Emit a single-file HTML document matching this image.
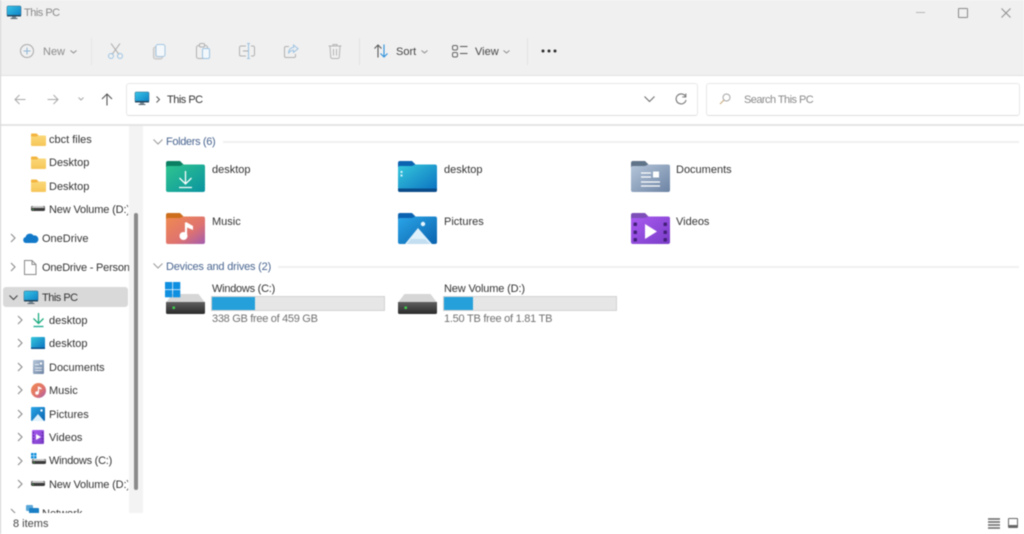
<!DOCTYPE html>
<html><head><meta charset="utf-8"><style>
html,body{margin:0;padding:0;width:1024px;height:534px;overflow:hidden;background:#fff}
body{position:relative;font-family:"Liberation Sans",sans-serif;font-size:11px;color:#333}
#w{position:absolute;left:0;top:0;width:1024px;height:534px;filter:blur(.4px)}
.t{position:absolute;white-space:nowrap;line-height:14px;height:14px;margin-top:1px}
.b{position:absolute}
svg.a{position:absolute;overflow:visible}
.g{color:#8a8a8a}
.h{color:#48648f}
.s{color:#707070}
.n{letter-spacing:-.5px}
</style></head><body><div id="w">
<svg width="0" height="0" style="position:absolute"><defs>
<linearGradient id="mon" x1="0" y1="0" x2="1" y2="1"><stop offset="0" stop-color="#38c6e8"/><stop offset="1" stop-color="#0d7fc4"/></linearGradient>
<linearGradient id="gGreen" x1="0" y1="0" x2="1" y2="1"><stop offset="0" stop-color="#2fc58f"/><stop offset="1" stop-color="#0a93a0"/></linearGradient>
<linearGradient id="gBlue" x1="0" y1="0" x2="1" y2="1"><stop offset="0" stop-color="#35c8dc"/><stop offset="1" stop-color="#0a6fc0"/></linearGradient>
<linearGradient id="gDoc" x1="0" y1="0" x2="1" y2="1"><stop offset="0" stop-color="#b5c6da"/><stop offset="1" stop-color="#6c83a3"/></linearGradient>
<linearGradient id="gMus" x1="0" y1="0" x2="1" y2="1"><stop offset="0" stop-color="#f08a50"/><stop offset=".6" stop-color="#de7270"/><stop offset="1" stop-color="#a35cb0"/></linearGradient>
<linearGradient id="gPic" x1="0" y1="0" x2="1" y2="1"><stop offset="0" stop-color="#2ba6e8"/><stop offset="1" stop-color="#0a62ae"/></linearGradient>
<linearGradient id="gVid" x1="0" y1="0" x2="1" y2="1"><stop offset="0" stop-color="#a95cf0"/><stop offset="1" stop-color="#7a3cc8"/></linearGradient>
<linearGradient id="gYel" x1="0" y1="0" x2="0" y2="1"><stop offset="0" stop-color="#fbdb7e"/><stop offset="1" stop-color="#f6c658"/></linearGradient>
<linearGradient id="gDr" x1="0" y1="0" x2="0" y2="1"><stop offset="0" stop-color="#5f5f5f"/><stop offset="1" stop-color="#2a2a2a"/></linearGradient>
<g id="pc"><rect x="0" y="0" width="14" height="10" rx="1" fill="url(#mon)" stroke="#255d80" stroke-width=".5"/><rect x="0" y="9" width="14" height="1.5" fill="#24465e"/><rect x="5" y="10.500" width="4" height="1.600" fill="#7b8b96"/><rect x="3.500" y="12" width="7" height="1" fill="#56646e"/></g>
<g id="yf"><path d="M0 1.500a1 1 0 0 1 1-1h4.500l2 2H14a1 1 0 0 1 1 1V12a1 1 0 0 1-1 1H1a1 1 0 0 1-1-1z" fill="url(#gYel)"/><path d="M0 1.500a1 1 0 0 1 1-1h4.500l2 2-2 1H0z" fill="#f3b53f"/></g>
<g id="dsm"><rect x="0" y="0" width="14" height="5" rx="1.500" fill="#3a3a3a"/><path d="M2 0h10l2 2H0z" fill="#c7c7c7"/><rect x="1.500" y="3" width="1" height="1" fill="#3fd04d"/></g>
<path id="chev" d="M0 0l4 4-4 4" fill="none" stroke="#8c8c8c" stroke-width="1.100"/>
<g id="bigdrive"><path d="M6.500 0h26l6.500 8.500H0z" fill="#d6d6d6"/><path d="M0 8h39v10.500a1.500 1.500 0 0 1-1.500 1.500h-36A1.500 1.500 0 0 1 0 18.500z" fill="url(#gDr)"/><rect x="6.500" y="12.500" width="2.500" height="2.500" fill="#3fd04d"/></g>
</defs></svg>

<!-- top chrome -->
<div class="b" style="left:0;top:0;width:1024px;height:75px;background:#f0f0f0"></div>
<div class="b" style="left:0;top:75px;width:1024px;height:1px;background:#e2e2e2"></div>
<svg class="a" style="left:7px;top:6px" width="14" height="13"><use href="#pc"/></svg>
<div class="t g n" style="left:24px;top:5px">This PC</div>
<div class="b" style="left:916px;top:12px;width:9px;height:1px;background:#b5b5b5"></div>
<div class="b" style="left:958px;top:8px;width:8px;height:8px;border:1px solid #8a8a8a;border-radius:1px"></div>
<svg class="a" style="left:1001px;top:8px" width="10" height="10"><path d="M.5.5l9 9M9.500.5l-9 9" stroke="#8f8f8f" fill="none"/></svg>

<!-- toolbar -->
<svg class="a" style="left:20px;top:44px" width="15" height="15"><circle cx="7" cy="7" r="6.500" fill="none" stroke="#a9a9a9"/><path d="M7 3.500v7M3.500 7h7" stroke="#8fb6d6"/></svg>
<div class="t g" style="left:43px;top:44px">New</div>
<svg class="a" style="left:70px;top:50px" width="7" height="4"><path d="M.5.5l3 2.500 3-2.500" stroke="#8c8c8c" fill="none"/></svg>
<div class="b" style="left:91px;top:38px;width:1px;height:27px;background:#e6e6e6"></div>
<svg class="a" style="left:108px;top:43px" width="15" height="17"><path d="M3 .5l8 11M12 .5l-8 11" stroke="#a9a9a9" fill="none"/><circle cx="3" cy="13" r="2.500" fill="none" stroke="#9cc3e2"/><circle cx="12" cy="13" r="2.500" fill="none" stroke="#9cc3e2"/></svg>
<svg class="a" style="left:153px;top:44px" width="13" height="16"><rect x=".5" y="3" width="9" height="12" rx="2" fill="#e0e0e0" stroke="#c4c4c4"/><rect x="3" y=".5" width="9" height="12" rx="2" fill="#f4f8fb" stroke="#a4c6e2"/></svg>
<svg class="a" style="left:196px;top:43px" width="15" height="17"><rect x=".5" y="2.500" width="11" height="13" rx="2" fill="none" stroke="#b0b0b0"/><rect x="3.500" y=".5" width="5" height="3.500" rx="1" fill="#f0f0f0" stroke="#b0b0b0"/><rect x="6.500" y="5.500" width="7" height="10" rx="1.500" fill="#f2f7fb" stroke="#9cc3e2"/></svg>
<svg class="a" style="left:239px;top:43px" width="16" height="17"><path d="M7 3H2a1.500 1.500 0 0 0-1.500 1.500v7A1.500 1.500 0 0 0 2 13h5M12 3h2a1.500 1.500 0 0 1 1.500 1.500v7A1.500 1.500 0 0 1 14 13h-2" fill="none" stroke="#b0b0b0"/><path d="M4 8h6" stroke="#a9a9a9"/><path d="M9.500.5v15M8 .5h3M8 15.500h3" stroke="#9cc3e2" fill="none"/></svg>
<svg class="a" style="left:284px;top:44px" width="15" height="15"><path d="M5 2.500H2A1.500 1.500 0 0 0 .5 4v8A1.500 1.500 0 0 0 2 13.500h8a1.500 1.500 0 0 0 1.500-1.500v-2" fill="none" stroke="#b0b0b0"/><path d="M9.500 1l4.500 3.700-4.500 3.700V6.200C7 6.200 5.500 7.500 4.500 9.500c0-3.500 2-6 5-6z" fill="none" stroke="#9cc3e2"/></svg>
<svg class="a" style="left:328px;top:43px" width="14" height="16"><path d="M.5 3h13M5 3V1.500h4V3M2 3l.7 11a1.500 1.500 0 0 0 1.500 1.500h5.600a1.500 1.500 0 0 0 1.500-1.500L12 3M5.500 6v6.500M8.500 6v6.500" fill="none" stroke="#b4b4b4"/></svg>
<div class="b" style="left:359px;top:38px;width:1px;height:27px;background:#e2e2e2"></div>
<svg class="a" style="left:373px;top:44px" width="16" height="14"><path d="M5 13.500V1M1.500 4.500L5 1l3.500 3.500" fill="none" stroke="#5a5a5a" stroke-width="1.100"/><path d="M11 .5V13M7.500 9.500L11 13l3.500-3.500" fill="none" stroke="#2a90dc" stroke-width="1.100"/></svg>
<div class="t" style="left:396px;top:44px;color:#444">Sort</div>
<svg class="a" style="left:421px;top:50px" width="7" height="4"><path d="M.5.5l3 2.500 3-2.500" stroke="#8c8c8c" fill="none"/></svg>
<svg class="a" style="left:452px;top:45px" width="16" height="13"><rect x=".5" y=".5" width="5" height="4.500" rx="1.500" fill="none" stroke="#666"/><rect x=".5" y="7.500" width="5" height="4.500" rx="1.500" fill="none" stroke="#666"/><path d="M8 1.500h7.500M8 8.500h7.500" stroke="#555"/></svg>
<div class="t" style="left:475px;top:44px;color:#444">View</div>
<svg class="a" style="left:503px;top:50px" width="7" height="4"><path d="M.5.5l3 2.500 3-2.500" stroke="#8c8c8c" fill="none"/></svg>
<div class="b" style="left:527px;top:38px;width:1px;height:27px;background:#e2e2e2"></div>
<svg class="a" style="left:541px;top:49px" width="16" height="4"><circle cx="2" cy="2" r="1.500" fill="#2c2c2c"/><circle cx="8" cy="2" r="1.500" fill="#2c2c2c"/><circle cx="14" cy="2" r="1.500" fill="#2c2c2c"/></svg>

<!-- nav bar -->
<svg class="a" style="left:14px;top:94px" width="12" height="11"><path d="M11.500 5.500H1M5.500 1L1 5.500 5.500 10" fill="none" stroke="#a8a8a8"/></svg>
<svg class="a" style="left:47px;top:94px" width="12" height="11"><path d="M.5 5.500H11M6.500 1L11 5.500 6.500 10" fill="none" stroke="#a8a8a8"/></svg>
<svg class="a" style="left:78px;top:97px" width="6" height="4"><path d="M.5.5L3 3 5.500.5" fill="none" stroke="#a8a8a8"/></svg>
<svg class="a" style="left:101px;top:93px" width="12" height="13"><path d="M6 12.500V1M1 6l5-5 5 5" fill="none" stroke="#555" stroke-width="1.100"/></svg>
<div class="b" style="left:126px;top:83px;width:570px;height:31px;border:1px solid #e8e8e8;border-bottom-color:#dedede;border-radius:3px"></div>
<svg class="a" style="left:135px;top:92px" width="14" height="13"><use href="#pc"/></svg>
<svg class="a" style="left:156px;top:96px" width="4" height="7"><path d="M.5.5l3 3-3 3" fill="none" stroke="#555"/></svg>
<div class="t n" style="left:167px;top:92px;color:#333">This PC</div>
<svg class="a" style="left:644px;top:96px" width="11" height="6"><path d="M.5.5l5 5 5-5" fill="none" stroke="#6a6a6a"/></svg>
<svg class="a" style="left:675px;top:93px" width="12" height="13"><path d="M10.500 3.500A5 5 0 1 0 11 7" fill="none" stroke="#777" stroke-width="1.100"/><path d="M10.800.5v3.500H7.300" fill="none" stroke="#777" stroke-width="1.100"/></svg>
<div class="b" style="left:706px;top:83px;width:312px;height:31px;border:1px solid #e8e8e8;border-bottom-color:#dedede;border-radius:3px"></div>
<svg class="a" style="left:719px;top:93px" width="12" height="12"><circle cx="7.500" cy="4.500" r="3.500" fill="none" stroke="#a5a5a5"/><path d="M5 7l-4 4" stroke="#caa97a" stroke-width="1.100"/></svg>
<div class="t g" style="left:744px;top:92px;letter-spacing:-.55px">Search This PC</div>

<div class="b" style="left:0;top:124px;width:1024px;height:2px;background:#e4e4e4"></div>

<!-- sidebar -->
<div class="b" style="left:129px;top:126px;width:14px;height:387px;background:#f3f3f3"></div>
<div class="b" style="left:134px;top:213px;width:4px;height:277px;background:#8a8a8a;border-radius:2px"></div>
<div class="b" style="left:3px;top:287px;width:125px;height:20px;background:#d9d9d9;border-radius:3px"></div>

<svg class="a" style="left:31px;top:133px" width="15" height="13"><use href="#yf"/></svg>
<div class="t" style="left:49px;top:132px">cbct files</div>
<svg class="a" style="left:31px;top:156px" width="15" height="13"><use href="#yf"/></svg>
<div class="t" style="left:49px;top:155px">Desktop</div>
<svg class="a" style="left:31px;top:179px" width="15" height="13"><use href="#yf"/></svg>
<div class="t" style="left:49px;top:179px">Desktop</div>
<svg class="a" style="left:31px;top:206px" width="14" height="6"><use href="#dsm"/></svg>
<div class="t" style="left:49px;top:202px;width:79px;overflow:hidden;letter-spacing:-.15px">New Volume (D:)</div>

<svg class="a" style="left:11px;top:234px" width="5" height="9"><use href="#chev"/></svg>
<svg class="a" style="left:23px;top:232px" width="16" height="12"><path d="M3 11a3 3 0 0 1-.5-5.900A4.500 4.500 0 0 1 10.500 3.500 3.700 3.700 0 0 1 12.500 11z" fill="#1279c9"/></svg>
<div class="t" style="left:42px;top:231px">OneDrive</div>
<svg class="a" style="left:11px;top:263px" width="5" height="9"><use href="#chev"/></svg>
<svg class="a" style="left:24px;top:260px" width="13" height="15"><path d="M.5.500h7.500l4 4V14.500H.5z" fill="#fff" stroke="#8a8a8a"/><path d="M8 .5v4h4" fill="none" stroke="#8a8a8a"/></svg>
<div class="t" style="left:42px;top:260px;width:87px;overflow:hidden;letter-spacing:-.2px">OneDrive - Personal</div>

<svg class="a" style="left:9px;top:295px" width="9" height="5"><path d="M.5.500l4 4 4-4" fill="none" stroke="#444" stroke-width="1.100"/></svg>
<svg class="a" style="left:24px;top:291px" width="14" height="13"><use href="#pc"/></svg>
<div class="t n" style="left:42px;top:290px;color:#333">This PC</div>

<svg class="a" style="left:18px;top:316px" width="5" height="9"><use href="#chev"/></svg>
<svg class="a" style="left:32px;top:313px" width="13" height="15"><path d="M6.500 0v10M1.500 5.500l5 5 5-5" fill="none" stroke="#1cab7f" stroke-width="1.300"/><path d="M1.500 13.500h10" stroke="#18a98f" stroke-width="1.300"/></svg>
<div class="t" style="left:49px;top:313px">desktop</div>

<svg class="a" style="left:18px;top:339px" width="5" height="9"><use href="#chev"/></svg>
<svg class="a" style="left:31px;top:337px" width="14" height="12"><rect width="14" height="12" rx="1" fill="url(#gBlue)"/><rect y="10.500" width="14" height="1.500" fill="#0a4f8a"/></svg>
<div class="t" style="left:49px;top:336px">desktop</div>

<svg class="a" style="left:18px;top:363px" width="5" height="9"><use href="#chev"/></svg>
<svg class="a" style="left:33px;top:360px" width="11" height="14"><rect width="11" height="14" rx="1" fill="url(#gDoc)"/><path d="M2 4.500h4M2 8h7M2 10.500h7" stroke="#fff" stroke-width=".8"/><rect x="7" y="2.500" width="2" height="2" fill="#fff"/></svg>
<div class="t" style="left:49px;top:360px">Documents</div>

<svg class="a" style="left:18px;top:386px" width="5" height="9"><use href="#chev"/></svg>
<svg class="a" style="left:31px;top:383px" width="15" height="15"><circle cx="7.500" cy="7.500" r="7.500" fill="url(#gMus)"/><path d="M7.500 3.500v6" stroke="#fff" stroke-width="1.200"/><path d="M7.500 3.500l3 1.500v1.500l-3-1" fill="#fff"/><circle cx="6" cy="10" r="1.800" fill="#fff"/></svg>
<div class="t" style="left:49px;top:383px">Music</div>

<svg class="a" style="left:18px;top:410px" width="5" height="9"><use href="#chev"/></svg>
<svg class="a" style="left:31px;top:407px" width="14" height="14"><rect width="14" height="14" rx="1" fill="url(#gPic)"/><path d="M1 14l6-7 6 7z" fill="#dff1fb"/><circle cx="10.500" cy="3.500" r="1.200" fill="#fff"/></svg>
<div class="t" style="left:49px;top:407px">Pictures</div>

<svg class="a" style="left:18px;top:433px" width="5" height="9"><use href="#chev"/></svg>
<svg class="a" style="left:32px;top:430px" width="12" height="14"><rect width="12" height="14" rx="1" fill="url(#gVid)"/><path d="M4 4l5 3-5 3z" fill="#fff"/><path d="M1.500 2v10M10.500 2v10" stroke="#4f2590" stroke-width="1" stroke-dasharray="1.500 1.500"/></svg>
<div class="t" style="left:49px;top:430px">Videos</div>

<svg class="a" style="left:18px;top:457px" width="5" height="9"><use href="#chev"/></svg>
<svg class="a" style="left:31px;top:453px" width="15" height="14"><rect x="0" y="0" width="2.500" height="2.500" fill="#0f8fdc"/><rect x="3" y="0" width="2.500" height="2.500" fill="#0f8fdc"/><rect x="0" y="3" width="2.500" height="2.500" fill="#0f8fdc"/><rect x="3" y="3" width="2.500" height="2.500" fill="#0f8fdc"/><g transform="translate(1,6)"><use href="#dsm"/></g></svg>
<div class="t" style="left:49px;top:453px;letter-spacing:-.25px">Windows (C:)</div>

<svg class="a" style="left:18px;top:480px" width="5" height="9"><use href="#chev"/></svg>
<svg class="a" style="left:31px;top:481px" width="14" height="6"><use href="#dsm"/></svg>
<div class="t" style="left:49px;top:477px;width:79px;overflow:hidden;letter-spacing:-.15px">New Volume (D:)</div>

<svg class="a" style="left:11px;top:509px" width="5" height="9"><use href="#chev"/></svg>
<svg class="a" style="left:23px;top:505px" width="16" height="12"><rect x="3" y="0" width="7" height="6" rx="1" fill="#5aa7d8"/><rect x="6" y="3" width="10" height="6" rx="1" fill="#1a7fc4"/></svg>
<div class="t" style="left:42px;top:506px">Network</div>

<!-- status bar -->
<div class="b" style="left:0;top:513px;width:1024px;height:21px;background:#fff"></div>
<div class="t" style="left:13px;top:516px;color:#444">8 items</div>
<svg class="a" style="left:988px;top:518px" width="12" height="11"><path d="M0 1h12M0 4h12M0 7h12M0 10h12" stroke="#666" stroke-width="1.500"/></svg>
<div class="b" style="left:1008px;top:518px;width:8px;height:6px;border:1.500px solid #666;border-bottom-width:3.500px;border-radius:1px;background:#fff"></div>

<!-- headings -->
<svg class="a" style="left:153px;top:139px" width="10" height="6"><path d="M.5.5l4.500 4.500L9.500.5" fill="none" stroke="#9a9a9a"/></svg>
<div class="t h" style="left:166px;top:134px;letter-spacing:-.35px">Folders (6)</div>
<div class="b" style="left:223px;top:141px;width:796px;height:2px;background:#f0f0f0"></div>
<svg class="a" style="left:153px;top:263px" width="10" height="6"><path d="M.5.5l4.500 4.500L9.500.5" fill="none" stroke="#9a9a9a"/></svg>
<div class="t h" style="left:166px;top:259px;letter-spacing:-.2px">Devices and drives (2)</div>
<div class="b" style="left:278px;top:266px;width:741px;height:2px;background:#f0f0f0"></div>

<!-- folders -->
<svg class="a" style="left:166px;top:161px" width="39" height="31"><path d="M0 2a2 2 0 0 1 2-2h12l4 4v4H0z" fill="#0b7f62"/><path d="M0 7a2 2 0 0 1 2-2h12l3-1.500h20a2 2 0 0 1 2 2V29a2 2 0 0 1-2 2H2a2 2 0 0 1-2-2z" fill="url(#gGreen)"/><path d="M19.500 10v13M13.500 17l6 6 6-6M13 26.500h13" fill="none" stroke="#fff" stroke-width="1.300"/></svg>
<div class="t" style="left:212px;top:162px">desktop</div>

<svg class="a" style="left:398px;top:161px" width="39" height="31"><path d="M0 2a2 2 0 0 1 2-2h12l4 4v4H0z" fill="#0b62b0"/><path d="M0 7a2 2 0 0 1 2-2h12l3-1.500h20a2 2 0 0 1 2 2V29a2 2 0 0 1-2 2H2a2 2 0 0 1-2-2z" fill="url(#gBlue)"/><path d="M0 27.500h39V29a2 2 0 0 1-2 2H2a2 2 0 0 1-2-2z" fill="#0a4c8a"/><rect x="2.500" y="10" width="2" height="2" fill="#d7f3fb"/><rect x="2.500" y="13.500" width="2" height="2" fill="#d7f3fb"/></svg>
<div class="t" style="left:444px;top:162px">desktop</div>

<svg class="a" style="left:631px;top:161px" width="39" height="31"><path d="M0 2a2 2 0 0 1 2-2h12l4 4v4H0z" fill="#5f7389"/><path d="M0 7a2 2 0 0 1 2-2h12l3-1.500h20a2 2 0 0 1 2 2V29a2 2 0 0 1-2 2H2a2 2 0 0 1-2-2z" fill="url(#gDoc)"/><path d="M10 12h10M10 16h10M10 21h19M10 25h19" stroke="#fff" stroke-width="1.300"/><rect x="22" y="10.500" width="6" height="6" fill="#fff"/></svg>
<div class="t" style="left:676px;top:162px">Documents</div>

<svg class="a" style="left:166px;top:213px" width="39" height="31"><path d="M0 2a2 2 0 0 1 2-2h12l4 4v4H0z" fill="#cc6e1c"/><path d="M0 7a2 2 0 0 1 2-2h12l3-1.500h20a2 2 0 0 1 2 2V29a2 2 0 0 1-2 2H2a2 2 0 0 1-2-2z" fill="url(#gMus)"/><path d="M20 9.500v14" stroke="#fff" stroke-width="2.200"/><path d="M20 9l7 4v4l-7-3z" fill="#fff"/><circle cx="17.500" cy="23" r="4" fill="#fff"/></svg>
<div class="t" style="left:212px;top:214px">Music</div>

<svg class="a" style="left:398px;top:213px" width="39" height="31"><path d="M0 2a2 2 0 0 1 2-2h12l4 4v4H0z" fill="#0b62b0"/><path d="M0 7a2 2 0 0 1 2-2h12l3-1.500h20a2 2 0 0 1 2 2V29a2 2 0 0 1-2 2H2a2 2 0 0 1-2-2z" fill="url(#gPic)"/><path d="M7 31L20 15l14 16z" fill="#dff1fb"/><path d="M13 26h14l5 5H9z" fill="#c2def0"/><circle cx="25" cy="11" r="2.200" fill="#e8f6fd"/></svg>
<div class="t" style="left:444px;top:214px">Pictures</div>

<svg class="a" style="left:631px;top:213px" width="39" height="31"><path d="M0 2a2 2 0 0 1 2-2h12l4 4v4H0z" fill="#7d4db8"/><path d="M0 7a2 2 0 0 1 2-2h12l3-1.500h20a2 2 0 0 1 2 2V29a2 2 0 0 1-2 2H2a2 2 0 0 1-2-2z" fill="url(#gVid)"/><path d="M14 11l12 7.500-12 7.500z" fill="#fff"/><g fill="#43207a"><rect x="2.500" y="9.500" width="3.500" height="3.500" rx=".8"/><rect x="2.500" y="17.500" width="3.500" height="3.500" rx=".8"/><rect x="2.500" y="25" width="3.500" height="3.500" rx=".8"/><rect x="32.500" y="9.500" width="3.500" height="3.500" rx=".8"/><rect x="32.500" y="17.500" width="3.500" height="3.500" rx=".8"/><rect x="32.500" y="25" width="3.500" height="3.500" rx=".8"/></g></svg>
<div class="t" style="left:676px;top:214px">Videos</div>

<!-- drives -->
<svg class="a" style="left:166px;top:294px" width="39" height="20"><use href="#bigdrive"/></svg>
<svg class="a" style="left:165px;top:282px" width="16" height="16"><g fill="#0f8fe0"><rect width="7.300" height="7.300"/><rect x="8" width="7.300" height="7.300"/><rect y="8" width="7.300" height="7.300"/><rect x="8" y="8" width="7.300" height="7.300"/></g></svg>
<div class="t" style="left:212px;top:281px;letter-spacing:-.25px">Windows (C:)</div>
<div class="b" style="left:211px;top:296px;width:172px;height:13px;background:#e6e6e6;border:1px solid #d2d2d2"></div>
<div class="b" style="left:212px;top:297px;width:43px;height:13px;background:#26a0da"></div>
<div class="t s" style="left:212px;top:311px;letter-spacing:-.3px">338 GB free of 459 GB</div>

<svg class="a" style="left:398px;top:294px" width="39" height="20"><use href="#bigdrive"/></svg>
<div class="t" style="left:444px;top:281px;letter-spacing:-.15px">New Volume (D:)</div>
<div class="b" style="left:443px;top:296px;width:172px;height:13px;background:#e6e6e6;border:1px solid #d2d2d2"></div>
<div class="b" style="left:444px;top:297px;width:29px;height:13px;background:#26a0da"></div>
<div class="t s" style="left:444px;top:311px;letter-spacing:-.25px">1.50 TB free of 1.81 TB</div>

<!-- window edge -->
<div class="b" style="left:0;top:0;width:1px;height:534px;background:#cfcfcf"></div>
</div></body></html>
